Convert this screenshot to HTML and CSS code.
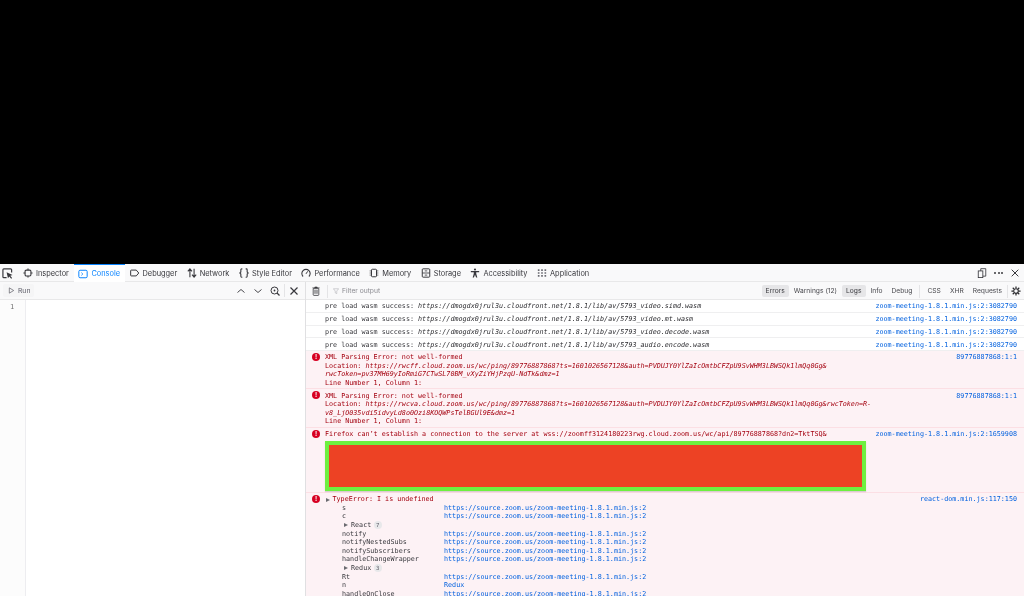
FILE: index.html
```html
<!DOCTYPE html>
<html lang="en">
<head>
<meta charset="utf-8">
<title>Console</title>
<link rel="stylesheet" href="styles.css">
</head>
<body>
<div class="page">
  <div class="viewport"></div>
  <div class="devtools">
    <nav class="tabs">
      <svg class="picker" viewBox="0 0 12 12"><path d="M5 10.500H2a1 1 0 0 1-1-1V2a1 1 0 0 1 1-1h7.500a1 1 0 0 1 1 1v3" fill="none" stroke="#38383d" stroke-width="1.300"/><path d="M5 4.500l6.500 3-2.500 1 2 2.500-1 .8-2-2.500-1.500 2z" fill="#38383d"/></svg>
      <div class="tab"><svg class="ico" viewBox="0 0 12 12"><rect x="2.500" y="2.500" width="7" height="7" rx="1.500" fill="none" stroke="#38383d" stroke-width="1.300"/><path d="M6 .5v2M6 9.500v2M.5 6h2M9.500 6h2" stroke="#38383d" stroke-width="1.200"/></svg>Inspector</div>
      <div class="tab active"><svg class="ico" viewBox="0 0 12 12"><rect x="1" y="1.500" width="10" height="9" rx="1.500" fill="none" stroke="#0a84ff" stroke-width="1.200"/><path d="M4 4.300 5.800 6 4 7.700" fill="none" stroke="#0a84ff"/></svg>Console</div>
      <div class="tab"><svg class="ico" viewBox="0 0 12 12"><path d="M1.500 2.500h6l3 3.500-3 3.500h-6a.7.7 0 0 1-.7-.7V3.200a.7.7 0 0 1 .7-.7z" fill="none" stroke="#38383d" stroke-width="1.200"/></svg>Debugger</div>
      <div class="tab"><svg class="ico" viewBox="0 0 12 12"><path d="M3.500 11V1.500M1 4l2.500-3L6 4M8.500 1v9.500M6 8l2.500 3L11 8" fill="none" stroke="#38383d" stroke-width="1.300"/></svg>Network</div>
      <div class="tab"><svg class="ico" viewBox="0 0 12 12"><path d="M4 1H3.200a1 1 0 0 0-1 1v2.700L1 6l1.200 1.300V10a1 1 0 0 0 1 1H4M8 1h.8a1 1 0 0 1 1 1v2.700L11 6 9.800 7.300V10a1 1 0 0 1-1 1H8" fill="none" stroke="#38383d" stroke-width="1.300"/></svg>Style Editor</div>
      <div class="tab"><svg class="ico" viewBox="0 0 12 12"><path d="M2.500 10.200a5 5 0 1 1 7 0" fill="none" stroke="#38383d" stroke-width="1.300"/><path d="M6 7l2-3" stroke="#38383d" stroke-width="1.200"/></svg>Performance</div>
      <div class="tab"><svg class="ico" viewBox="0 0 12 12"><rect x="3" y="1.500" width="6" height="9" rx="1" fill="none" stroke="#38383d" stroke-width="1.200"/><path d="M.8 3.500h1.500M.8 6h1.500M.8 8.500h1.500M9.700 3.500h1.500M9.700 6h1.500M9.700 8.500h1.500" stroke="#38383d" stroke-width=".9"/></svg>Memory</div>
      <div class="tab"><svg class="ico" viewBox="0 0 12 12"><rect x="1.500" y="1" width="9" height="10" rx="1" fill="none" stroke="#38383d" stroke-width="1.200"/><path d="M1.500 6h9M4.500 3.500h3M4.500 8.500h3" stroke="#38383d"/></svg>Storage</div>
      <div class="tab"><svg class="ico" viewBox="0 0 12 12"><circle cx="6" cy="1.800" r="1.300" fill="#38383d"/><path d="M1 3.700h10v1.300H7.500v2L8.800 11.500H7.300L6 8 4.700 11.500H3.200L4.500 7V5H1z" fill="#38383d"/></svg>Accessibility</div>
      <div class="tab"><svg class="ico" viewBox="0 0 12 12"><path d="M1 1.500h2v2H1zM5 1.500h2v2H5zM9 1.500h2v2H9zM1 5h2v2H1zM5 5h2v2H5zM9 5h2v2H9zM1 8.500h2v2H1zM5 8.500h2v2H5zM9 8.500h2v2H9z" fill="#6b6b72"/></svg>Application</div>
      <div class="tab-end">
        <svg class="ico-end" viewBox="0 0 12 12"><rect x="1.500" y="3.500" width="5.500" height="8" fill="none" stroke="#38383d"/><path d="M4.500 3.500V.8h6v9H7" fill="none" stroke="#38383d"/></svg>
        <span class="dots"><i></i><i></i><i></i></span>
        <svg class="ico-end" viewBox="0 0 12 12"><path d="M2 2l8 8M10 2l-8 8" stroke="#38383d" stroke-width="1.200"/></svg>
      </div>
    </nav>
    <div class="panes">
      <section class="editor">
        <div class="editor-bar">
          <div class="run"><svg class="run-ico" viewBox="0 0 8 8"><path d="M1.500 1l5 3-5 3z" fill="none" stroke="#5b5b66" stroke-width=".8"/></svg>Run</div>
          <div class="editor-tools">
            <svg class="tool" viewBox="0 0 10 10"><path d="M1.500 6.500 5 3.500l3.500 3" fill="none" stroke="#4a4a4f"/></svg>
            <svg class="tool" viewBox="0 0 10 10"><path d="M1.500 3.500 5 6.500l3.500-3" fill="none" stroke="#4a4a4f"/></svg>
            <svg class="tool" viewBox="0 0 10 10"><circle cx="4.500" cy="4.500" r="3.500" fill="none" stroke="#38383d"/><path d="M7 7l2.500 2.500" stroke="#38383d" stroke-width="1.200"/><circle cx="4.500" cy="4.500" r=".9" fill="#38383d"/></svg>
            <span class="tool-sep"></span>
            <svg class="tool" viewBox="0 0 10 10"><path d="M1.500 1.500l7 7M8.500 1.500l-7 7" stroke="#38383d" stroke-width="1.200"/></svg>
          </div>
        </div>
        <div class="editor-body">
          <div class="gutter">1</div>
          <div class="code"></div>
        </div>
      </section>
      <section class="console">
        <div class="filter-bar">
          <svg class="trash" viewBox="0 0 10 12"><path d="M1.500 3v7.500a1 1 0 0 0 1 1h5a1 1 0 0 0 1-1V3z" fill="none" stroke="#38383d"/><path d="M.5 2h9M3.500 2V1h3v1M3.500 4.500v5M5 4.500v5M6.500 4.500v5" stroke="#38383d" stroke-width=".8"/></svg>
          <div class="filter"><svg class="funnel" viewBox="0 0 8 8"><path d="M.5 1h7L5 4v3.500L3 6.500V4z" fill="none" stroke="#a9a9ae" stroke-width=".7"/></svg>Filter output</div>
          <div class="chips">
            <span class="chip on">Errors</span><span class="chip">Warnings (12)</span><span class="chip on">Logs</span><span class="chip">Info</span><span class="chip">Debug</span>
            <span class="chip-sep"></span>
            <span class="chip">CSS</span><span class="chip">XHR</span><span class="chip">Requests</span>
            <span class="chip-sep tight"></span>
            <svg class="gear" viewBox="0 0 12 12"><circle cx="6" cy="6" r="2.800" fill="none" stroke="#2a2a2e" stroke-width="1.300"/><path d="M6 .5v2.200M6 9.300v2.200M.5 6h2.200M9.300 6h2.200M2.100 2.100l1.600 1.600M8.300 8.300l1.600 1.600M9.900 2.100 8.300 3.700M3.700 8.300 2.100 9.900" stroke="#2a2a2e" stroke-width="1.500"/></svg>
          </div>
        </div>
        <div class="log">
          <div class="row"><div class="msg">pre load wasm success: <em>https://dmogdx0jrul3u.cloudfront.net/1.8.1/lib/av/5793_video.simd.wasm</em></div><a class="src">zoom-meeting-1.8.1.min.js:2:3082790</a></div>
          <div class="row"><div class="msg">pre load wasm success: <em>https://dmogdx0jrul3u.cloudfront.net/1.8.1/lib/av/5793_video.mt.wasm</em></div><a class="src">zoom-meeting-1.8.1.min.js:2:3082790</a></div>
          <div class="row"><div class="msg">pre load wasm success: <em>https://dmogdx0jrul3u.cloudfront.net/1.8.1/lib/av/5793_video.decode.wasm</em></div><a class="src">zoom-meeting-1.8.1.min.js:2:3082790</a></div>
          <div class="row"><div class="msg">pre load wasm success: <em>https://dmogdx0jrul3u.cloudfront.net/1.8.1/lib/av/5793_audio.encode.wasm</em></div><a class="src">zoom-meeting-1.8.1.min.js:2:3082790</a></div>
          <div class="row err">
            <span class="badge">!</span>
            <div class="msg">XML Parsing Error: not well-formed<br>Location: <em>https://rwcff.cloud.zoom.us/wc/ping/89776887868?ts=1601026567128&amp;auth=PVDUJY0YlZaIcOmtbCFZpU9SvWHM3LBWSQk1lmQq0Gg&amp;<br>rwcToken=pv37MH69yIoRmiG7CTwSL70BM_vXyZiYHjPzqU-NdTk&amp;dmz=1</em><br>Line Number 1, Column 1:</div>
            <a class="src">89776887868:1:1</a>
          </div>
          <div class="row err">
            <span class="badge">!</span>
            <div class="msg">XML Parsing Error: not well-formed<br>Location: <em>https://rwcva.cloud.zoom.us/wc/ping/89776887868?ts=1601026567128&amp;auth=PVDUJY0YlZaIcOmtbCFZpU9SvWHM3LBWSQk1lmQq0Gg&amp;rwcToken=R-<br>v8_LjO035vdi5idvyLd8o0Ozi8KOQWPsTelBGUl9E&amp;dmz=1</em><br>Line Number 1, Column 1:</div>
            <a class="src">89776887868:1:1</a>
          </div>
          <div class="row err">
            <span class="badge">!</span>
            <div class="msg">Firefox can’t establish a connection to the server at wss://zoomff3124180223rwg.cloud.zoom.us/wc/api/89776887868?dn2=TktTSQ&amp;
              <div class="redact"></div>
            </div>
            <a class="src">zoom-meeting-1.8.1.min.js:2:1659908</a>
          </div>
          <div class="row err">
            <span class="badge">!</span>
            <div class="msg">
              <div class="head"><span class="tri"></span>TypeError: I is undefined</div>
              <div class="stack">
                <span class="fn">s</span><a class="url">https://source.zoom.us/zoom-meeting-1.8.1.min.js:2</a>
                <span class="fn">c</span><a class="url">https://source.zoom.us/zoom-meeting-1.8.1.min.js:2</a>
                <span class="group"><span class="tri dark"></span>React<b class="count">7</b></span>
                <span class="fn">notify</span><a class="url">https://source.zoom.us/zoom-meeting-1.8.1.min.js:2</a>
                <span class="fn">notifyNestedSubs</span><a class="url">https://source.zoom.us/zoom-meeting-1.8.1.min.js:2</a>
                <span class="fn">notifySubscribers</span><a class="url">https://source.zoom.us/zoom-meeting-1.8.1.min.js:2</a>
                <span class="fn">handleChangeWrapper</span><a class="url">https://source.zoom.us/zoom-meeting-1.8.1.min.js:2</a>
                <span class="group"><span class="tri dark"></span>Redux<b class="count">3</b></span>
                <span class="fn">Rt</span><a class="url">https://source.zoom.us/zoom-meeting-1.8.1.min.js:2</a>
                <span class="fn">n</span><a class="url">Redux</a>
                <span class="fn">handleOnClose</span><a class="url">https://source.zoom.us/zoom-meeting-1.8.1.min.js:2</a>
              </div>
            </div>
            <a class="src">react-dom.min.js:117:150</a>
          </div>
        </div>
      </section>
    </div>
  </div>
</div>
</body>
</html>
```
FILE: styles.css
```css
* { box-sizing: border-box; }
html, body { margin: 0; padding: 0; height: 100%; overflow: hidden; background: #000; }
body { font-family: Inter, "Liberation Sans", sans-serif; }
.page { height: 596px; width: 1024px; display: flex; flex-direction: column; overflow: hidden; }
.viewport { height: 264px; flex: none; background: #000; }
.devtools { flex: 1; min-height: 0; display: flex; flex-direction: column; background: #fff; filter: blur(.3px); }

.tabs { height: 18px; flex: none; display: flex; align-items: stretch; background: #f9f9fa; border-bottom: 1px solid #e8e8e9; font-size: 7.400px; color: #38383d; padding-left: 2px; }
.picker { width: 11px; height: 11px; margin: 3.500px 5.500px 0 0; flex: none; }
.tab { display: flex; align-items: center; gap: 3px; padding: 0 5px 0 4.500px; border-top: 1px solid transparent; white-space: nowrap; }
.tab.active { color: #0a84ff; border-top: 1px solid #0a84ff; background: #fff; margin-bottom: -1px; }
.ico { width: 10px; height: 10px; flex: none; }
.tab-end { margin-left: auto; display: flex; align-items: center; gap: 7px; padding-right: 4px; }
.ico-end { width: 10px; height: 10px; }
.dots { display: flex; gap: 1.500px; }
.dots i { width: 2px; height: 2px; border-radius: 50%; background: #38383d; }

.panes { flex: 1; min-height: 0; display: flex; }
.editor { width: 306px; flex: none; display: flex; flex-direction: column; border-right: 1px solid #e0e0e2; }
.editor-bar { height: 18px; flex: none; display: flex; align-items: center; justify-content: space-between; background: #f9f9fa; border-bottom: 1px solid #e8e8e9; padding: 0 6px 0 3px; }
.run { display: flex; align-items: center; gap: 3px; font-size: 6.800px; color: #5b5b66; padding: 2px 4px 2px 5px; background: #f5f5f6; border-radius: 2px; }
.run-ico { width: 7px; height: 7px; }
.editor-tools { display: flex; align-items: center; gap: 7px; }
.tool { width: 10px; height: 10px; }
.tool-sep { width: 1px; height: 13px; background: #e4e4e6; margin: 0 -3px; }
.editor-body { flex: 1; display: flex; background: #fff; }
.gutter { width: 26px; flex: none; border-right: 1px solid #ededf0; background: #fcfcfc; padding: 2px 0 0 10px; font: 7px/10px "DejaVu Sans Mono", monospace; color: #737373; }
.code { flex: 1; }

.console { flex: 1; min-width: 0; display: flex; flex-direction: column; }
.filter-bar { height: 18px; flex: none; display: flex; align-items: center; background: #f9f9fa; border-bottom: 1px solid #e8e8e9; padding: 1px 3px 0 6px; font-size: 6.700px; }
.trash { width: 8px; height: 10px; flex: none; margin-right: 7px; }
.filter { display: flex; align-items: center; gap: 3px; color: #8a8a90; flex: 1; padding-left: 5px; border-left: 1px solid #e4e4e6; height: 13px; }
.funnel { width: 6px; height: 6px; }
.chips { display: flex; align-items: center; gap: 1px; color: #4a4a4f; }
.chip { padding: 2px 4px; border-radius: 2px; white-space: nowrap; }
.chip.on { background: #e6e6e8; color: #38383d; }
.chip-sep { width: 1px; height: 13px; background: #e4e4e6; margin: 0 2px; }
.chip-sep.tight { margin: 0 2px 0 0; }
.gear { width: 10px; height: 10px; }

.log { flex: 1; min-height: 0; overflow: hidden; font: 6.720px/8.500px "DejaVu Sans Mono", monospace; color: #38383d; }
.row { display: flex; align-items: flex-start; position: relative; padding: 2.300px 7px 1px 19px; border-bottom: 1px solid #efeff0; }
.msg { flex: 1; min-width: 0; white-space: nowrap; }
.msg em { font-style: italic; color: #2a2a2e; }
.src { flex: none; color: #0060df; }
.row.err { background: #fdf2f5; color: #a4000f; border-bottom: 1px solid #fcdfe4; }
.row.err .msg em { color: #a4000f; }
.badge { position: absolute; left: 6px; top: 2px; width: 8px; height: 8px; border-radius: 50%; background: #d70022; color: #fff; font: 700 6.500px/8px "Liberation Sans", sans-serif; text-align: center; }

.redact { width: 541px; height: 50px; margin-top: 2.500px; background: #ed4224; border: 4px solid #6ef03f; box-shadow: 0 1px 1px rgba(0,0,0,.15); }
.head { display: flex; align-items: center; }
.tri { width: 0; height: 0; border-left: 4px solid #6b6b70; border-top: 2.500px solid transparent; border-bottom: 2.500px solid transparent; margin: 0 3px 0 .5px; display: inline-block; }
.stack { display: grid; grid-template-columns: 102px auto; justify-content: start; padding-left: 17px; color: #38383d; line-height: 8.600px; }
.group { grid-column: 1 / -1; padding-left: 1.500px; }
.fn { white-space: nowrap; }
.url { color: #0060df; }
.count { display: inline-block; width: 8px; height: 8px; line-height: 8px; text-align: center; font-weight: 400; font-size: 5.600px; background: #e8e8ea; border-radius: 50%; color: #5b5b66; margin-left: 2.500px; vertical-align: top; }
```
